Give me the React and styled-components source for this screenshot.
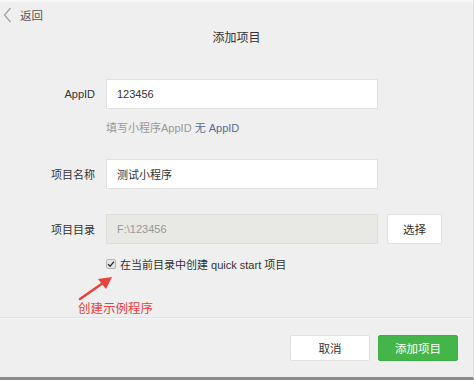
import styled, { createGlobalStyle } from "styled-components";

const Global = createGlobalStyle`
    html, body {
        margin: 0;
        padding: 0;
        background: #efefef;
    }
    body {
        font-family: "Liberation Sans", Arial, "Noto Sans CJK SC", sans-serif;
        font-size: 11px;
        color: #333;
    }
`;

export default function App () {

    return (
        <>
            <Global />
            <Window>
                <BackLink>
                    <svg width="9" height="16" viewBox="0 0 9 16">
                        <path d="M7.5 1 L1.5 8 L7.5 15" fill="none" stroke="#a0a0a0" strokeWidth="1.2" />
                    </svg>
                    <span>返回</span>
                </BackLink>
                <Title>添加项目</Title>

                <Form>
                    <Row>
                        <Label>AppID</Label>
                        <Input>123456</Input>
                    </Row>
                    <Hint>
                        填写小程序AppID <HintLink>无 AppID</HintLink>
                    </Hint>

                    <Row $top={24}>
                        <Label>项目名称</Label>
                        <Input>测试小程序</Input>
                    </Row>

                    <Row $top={25}>
                        <Label>项目目录</Label>
                        <Input $disabled>F:\123456</Input>
                        <PickButton>选择</PickButton>
                    </Row>

                    <CheckRow>
                        <CheckBox>
                            <svg width="8" height="8" viewBox="0 0 8 8">
                                <path d="M1 4.2 L3.1 6.2 L7 1.6" fill="none" stroke="#333" strokeWidth="1.4" />
                            </svg>
                        </CheckBox>
                        <span>在当前目录中创建 quick start 项目</span>
                    </CheckRow>

                    <Note>
                        <svg width="40" height="26" viewBox="0 0 40 26">
                            <path d="M4 24 L27 8" stroke="#e8413f" strokeWidth="2.6" strokeLinecap="round" />
                            <path d="M36 2 L22 4 L30 14 Z" fill="#e8413f" />
                        </svg>
                        <NoteText>创建示例程序</NoteText>
                    </Note>
                </Form>

                <Footer>
                    <Button>取消</Button>
                    <Button $primary>添加项目</Button>
                </Footer>
            </Window>
        </>
    );

}

const Window = styled.div`
    width: 473px;
    height: 377px;
    display: flex;
    flex-direction: column;
    background: #efefef;
    border-right: 1px solid #dcdcdc;
    border-bottom: 3px solid #8a8a8a;
    box-shadow: inset 0 3px 3px -2px #ffffff;
`;

const BackLink = styled.div`
    height: 16px;
    margin-top: 7px;
    margin-left: 3px;
    display: flex;
    align-items: center;
    gap: 8px;
    color: #555;
    font-size: 11.5px;
`;

const Title = styled.div`
    margin-top: 7px;
    line-height: 16px;
    text-align: center;
    color: #333;
    font-size: 12px;
`;

const Form = styled.div`
    margin-top: 33px;
    display: flex;
    flex-direction: column;
`;

const Row = styled.div`
    margin-top: ${p => p.$top || 0}px;
    display: flex;
    align-items: center;
`;

const Label = styled.div`
    width: 95px;
    margin-right: 11px;
    text-align: right;
    color: #333;
    font-size: 11px;
`;

const Input = styled.div`
    box-sizing: border-box;
    width: 272px;
    height: 30px;
    padding: 0 10px;
    display: flex;
    align-items: center;
    background: ${p => p.$disabled ? "#e8e8e5" : "#ffffff"};
    border: 1px solid ${p => p.$disabled ? "#dcdcd8" : "#e0e0e0"};
    color: ${p => p.$disabled ? "#999" : "#333"};
    font-size: 11px;
`;

const PickButton = styled.div`
    box-sizing: border-box;
    width: 55px;
    height: 30px;
    margin-left: 9px;
    display: flex;
    align-items: center;
    justify-content: center;
    background: #fff;
    border: 1px solid #e0e0e0;
    border-radius: 2px;
    color: #333;
    font-size: 11.5px;
`;

const Hint = styled.div`
    margin-top: 12px;
    margin-left: 106px;
    line-height: 14px;
    color: #999;
    font-size: 11px;
`;

const HintLink = styled.span`
    color: #576b95;
`;

const CheckRow = styled.div`
    margin-top: 13px;
    margin-left: 106px;
    height: 14px;
    display: flex;
    align-items: center;
    gap: 4px;
    color: #333;
    font-size: 11px;
`;

const CheckBox = styled.span`
    box-sizing: border-box;
    width: 10px;
    height: 10px;
    display: flex;
    align-items: center;
    justify-content: center;
    background: #e6e6e6;
    border: 1px solid #b5b5b5;
    border-radius: 2px;
`;

const Note = styled.div`
    margin-left: 76px;
    margin-top: 4px;
    display: flex;
    flex-direction: column;
    align-items: flex-start;
`;

const NoteText = styled.div`
    margin-left: 2px;
    line-height: 16px;
    color: #e8413f;
    font-size: 12.5px;
`;

const Footer = styled.div`
    margin-top: auto;
    height: 60px;
    box-sizing: border-box;
    padding: 17px 15px 0 0;
    display: flex;
    justify-content: flex-end;
    align-items: flex-start;
    gap: 8px;
    border-top: 1px solid #e2e2e2;
    box-shadow: inset 0 1px 0 #f8f8f8;
`;

const Button = styled.div`
    box-sizing: border-box;
    width: 80px;
    height: 26px;
    display: flex;
    align-items: center;
    justify-content: center;
    background: ${p => p.$primary ? "#44b549" : "#ffffff"};
    border: 1px solid ${p => p.$primary ? "#3fae44" : "#e0e0e0"};
    border-radius: 2px;
    color: ${p => p.$primary ? "#ffffff" : "#333"};
    font-size: 11.5px;
`;
